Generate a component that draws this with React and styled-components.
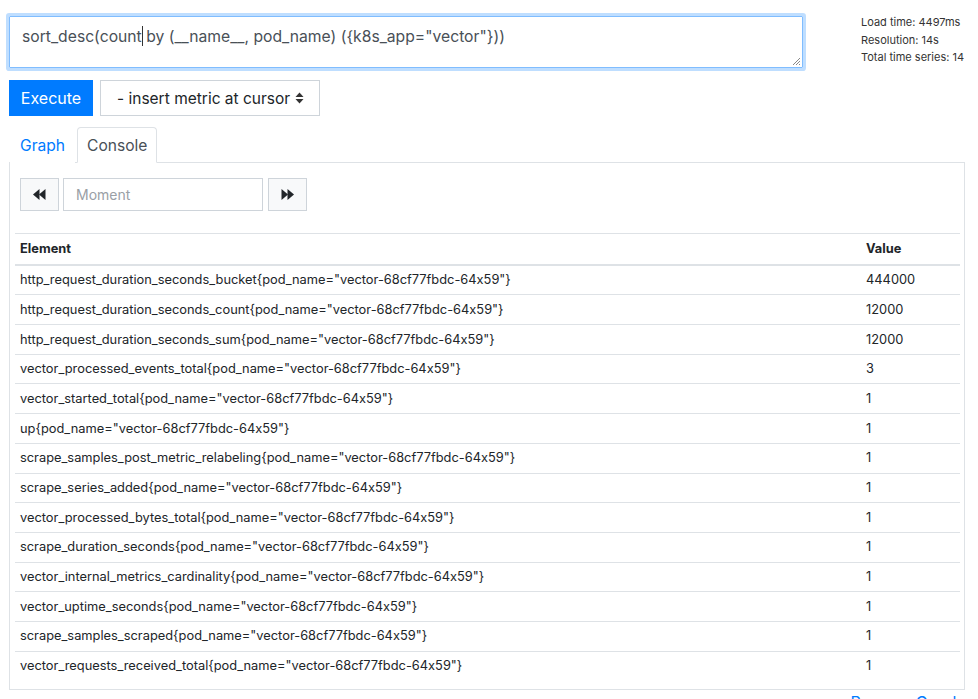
import React from "react";
import styled, { createGlobalStyle } from "styled-components";

const Global = createGlobalStyle`
  html, body { margin: 0; padding: 0; background: #fff; }
  body {
    font-family: Inter, "Noto Sans", sans-serif;
    font-feature-settings: "calt" 0;
    color: #212529;
    overflow: hidden;
  }
  * { box-sizing: border-box; }
`;

const Page = styled.div`
  width: 978px;
  height: 699px;
  overflow: hidden;
  padding: 16px 0 0 9px;
`;

const TopRow = styled.div`
  display: flex;
  align-items: flex-start;
`;

const Editor = styled.div`
  position: relative;
  width: 794px;
  height: 52px;
  border: 1px solid #80bdff;
  box-shadow: 0 0 0 3px rgba(0, 123, 255, 0.25);
  border-radius: 1px;
  padding: 8px 12px;
  font-size: 15.7px;
  line-height: 24px;
  color: #495057;
  white-space: pre;
`;

const Caret = styled.span`
  display: inline-block;
  width: 1px;
  height: 20px;
  background: #333;
  vertical-align: -4px;
  margin-right: -1px;
`;

const Grip = styled.svg`
  position: absolute;
  right: 1px;
  bottom: 1px;
`;

const Stats = styled.div`
  margin-left: 58px;
  margin-top: -2px;
  font-size: 11px;
  line-height: 17.5px;
  color: #333;
`;

const Controls = styled.div`
  display: flex;
  gap: 7px;
  margin-top: 12px;
`;

const ExecuteButton = styled.button`
  width: 84px;
  height: 36px;
  border: none;
  border-radius: 0;
  background: #007bff;
  color: #fff;
  font-family: inherit;
  font-size: 16px;
  padding: 0;
`;

const Select = styled.div`
  width: 220px;
  height: 36px;
  border: 1px solid #ced4da;
  display: flex;
  align-items: center;
  justify-content: space-between;
  padding: 0 15px 0 16px;
  font-size: 15.5px;
  color: #212529;
`;

const Tabs = styled.div`
  display: flex;
  align-items: flex-end;
  margin-top: 10px;
  height: 36px;
`;

const Tab = styled.div`
  height: 36px;
  padding: 0 9px;
  display: flex;
  align-items: center;
  font-size: 15.6px;
  color: ${(p) => (p.$active ? "#495057" : "#007bff")};
  border: 1px solid ${(p) => (p.$active ? "#dee2e6" : "transparent")};
  border-bottom-color: ${(p) => (p.$active ? "#fff" : "transparent")};
  border-radius: 4px 4px 0 0;
  margin-bottom: -1px;
  background: #fff;
  position: relative;
  z-index: 1;
  margin-left: ${(p) => (p.$first ? "1px" : "0")};
  margin-right: ${(p) => (p.$first ? "2px" : "0")};
`;

const Panel = styled.div`
  width: 956px;
  height: 528px;
  border: 1px solid #dee2e6;
  padding: 15px 5px 0 5px;
`;

const MomentGroup = styled.div`
  display: flex;
  gap: 4px;
  margin-left: 5px;
  height: 33px;
`;

const NavButton = styled.div`
  width: 39px;
  height: 33px;
  background: #f8f9fa;
  border: 1px solid #ced4da;
  display: flex;
  align-items: center;
  justify-content: center;
  margin-left: ${(p) => p.$gap || 0}px;
`;

const MomentInput = styled.div`
  width: 200px;
  height: 33px;
  border: 1px solid #ced4da;
  padding: 0 12px;
  display: flex;
  align-items: center;
  font-size: 14px;
  color: #9aa0a6;
`;

const Table = styled.table`
  width: 945px;
  margin-top: 22px;
  border-collapse: collapse;
  font-size: 12.85px;
  line-height: 19.8px;
`;

const Th = styled.th`
  text-align: left;
  font-weight: 700;
  padding: 5px 5px 5px;
  border-top: 1px solid #dee2e6;
  border-bottom: 2px solid #dee2e6;
  width: ${(p) => p.$w || "auto"};
`;

const Td = styled.td`
  padding: 4.45px 5px;
  border-top: 1px solid #dee2e6;
  white-space: nowrap;
`;

const Footer = styled.div`
  display: flex;
  justify-content: flex-end;
  width: 956px;
  margin-top: 2px;
`;

const Link = styled.span`
  color: #007bff;
  font-size: 16px;
  margin-right: 3px;
`;

const Updown = () => (
  <svg width="9" height="12" viewBox="0 0 9 12">
    <path d="M4.5 0.5 L8.5 5 L0.5 5 Z" fill="#333" />
    <path d="M4.5 11.5 L8.5 7 L0.5 7 Z" fill="#333" />
  </svg>
);

const Backward = () => (
  <svg width="13" height="11" viewBox="0 0 13 11">
    <path d="M0 5.5 L6.5 0 L6.5 11 Z" fill="#212529" />
    <path d="M6 5.5 L12.5 0 L12.5 11 Z" fill="#212529" />
  </svg>
);

const Forward = () => (
  <svg width="13" height="11" viewBox="0 0 13 11">
    <path d="M13 5.5 L6.5 0 L6.5 11 Z" fill="#212529" />
    <path d="M7 5.5 L0.5 0 L0.5 11 Z" fill="#212529" />
  </svg>
);

const pod = '{pod_name="vector-68cf77fbdc-64x59"}';
const rows = [
  ["http_request_duration_seconds_bucket", "444000"],
  ["http_request_duration_seconds_count", "12000"],
  ["http_request_duration_seconds_sum", "12000"],
  ["vector_processed_events_total", "3"],
  ["vector_started_total", "1"],
  ["up", "1"],
  ["scrape_samples_post_metric_relabeling", "1"],
  ["scrape_series_added", "1"],
  ["vector_processed_bytes_total", "1"],
  ["scrape_duration_seconds", "1"],
  ["vector_internal_metrics_cardinality", "1"],
  ["vector_uptime_seconds", "1"],
  ["scrape_samples_scraped", "1"],
  ["vector_requests_received_total", "1"],
];

export default function App() {
  return (
    <Page>
      <Global />
      <TopRow>
        <Editor>
          sort_desc(count<Caret /> by (__name__, pod_name) ({'{'}k8s_app="vector"{'}'}))
          <Grip width="10" height="10" viewBox="0 0 10 10">
            <path d="M9 2 L2 9 M9 5 L5 9 M9 8 L8 9" stroke="#888" strokeWidth="1" />
          </Grip>
        </Editor>
        <Stats>
          <div>Load time: 4497ms</div>
          <div>Resolution: 14s</div>
          <div>Total time series: 14</div>
        </Stats>
      </TopRow>
      <Controls>
        <ExecuteButton>Execute</ExecuteButton>
        <Select>
          <span>- insert metric at cursor</span>
          <Updown />
        </Select>
      </Controls>
      <Tabs>
        <Tab $first>Graph</Tab>
        <Tab $active>Console</Tab>
      </Tabs>
      <Panel>
        <MomentGroup>
          <NavButton>
            <Backward />
          </NavButton>
          <MomentInput>Moment</MomentInput>
          <NavButton $gap={1}>
            <Forward />
          </NavButton>
        </MomentGroup>
        <Table>
          <thead>
            <tr>
              <Th>Element</Th>
              <Th $w="99px">Value</Th>
            </tr>
          </thead>
          <tbody>
            {rows.map(([name, v]) => (
              <tr key={name}>
                <Td>
                  {name}
                  {pod}
                </Td>
                <Td>{v}</Td>
              </tr>
            ))}
          </tbody>
        </Table>
      </Panel>
      <Footer>
        <Link>Remove Graph</Link>
      </Footer>
    </Page>
  );
}
